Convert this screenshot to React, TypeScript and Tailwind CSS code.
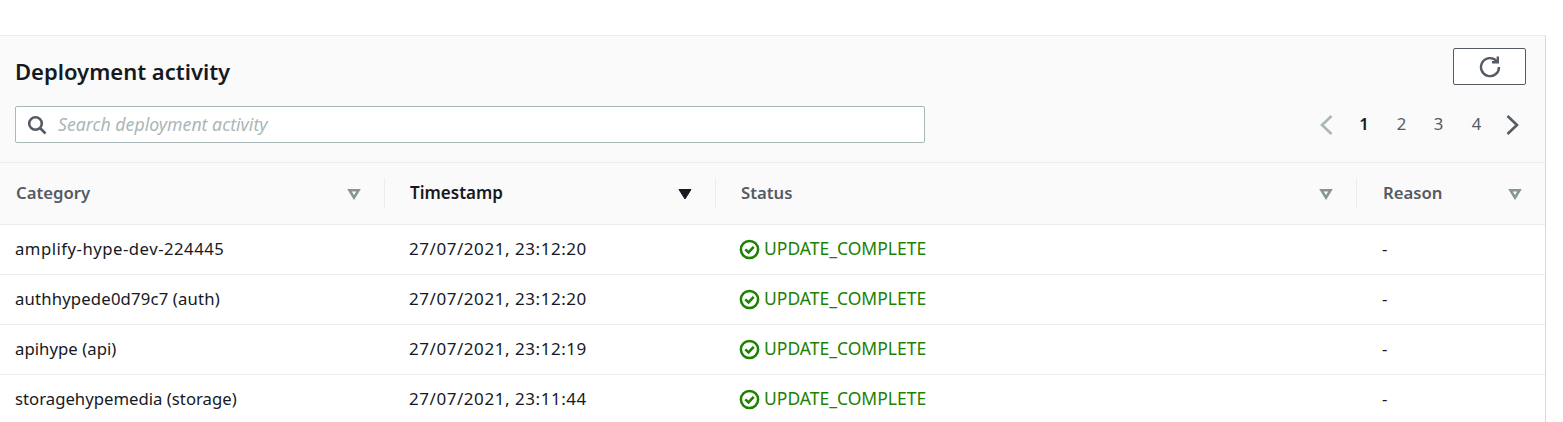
import React from "react";

const rows = [
  { name: "amplify-hype-dev-224445", time: "27/07/2021, 23:12:20", track: "tracking-[0.5px]" },
  { name: "authhypede0d79c7 (auth)", time: "27/07/2021, 23:12:20", track: "tracking-[0.17px]" },
  { name: "apihype (api)", time: "27/07/2021, 23:12:19", track: "tracking-[0.05px]" },
  { name: "storagehypemedia (storage)", time: "27/07/2021, 23:11:44", track: "tracking-[0.02px]" },
];

function Sort({ active = false }: { active?: boolean }) {
  return active ? (
    <svg width="14" height="12" viewBox="0 0 14 12" className="shrink-0">
      <path d="M1 1.5h12L7 11z" fill="#16191f" stroke="#16191f" strokeLinejoin="round" />
    </svg>
  ) : (
    <svg width="14" height="12" viewBox="0 0 14 12" className="shrink-0">
      <path d="M2.5 2.2h9L7 9.6z" fill="none" stroke="#879596" strokeWidth="2.6" strokeLinejoin="miter" />
    </svg>
  );
}

function Head({ label, active, divider, className }: { label: string; active?: boolean; divider?: boolean; className: string }) {
  return (
    <div className={`relative flex items-center justify-between ${className}`}>
      <span className={`-mt-[1px] font-semibold ${active ? "text-[17px] text-[#16191f]" : "text-[16.7px] text-[#545b64]"}`}>{label}</span>
      <Sort active={active} />
      {divider && <span className="absolute right-0 top-[15px] h-[30px] w-px bg-[#eaeded]" />}
    </div>
  );
}

function Check() {
  return (
    <svg width="21" height="21" viewBox="0 0 21 21" className="shrink-0" fill="none" stroke="#1d8102" strokeWidth="2.5">
      <circle cx="10.5" cy="10.5" r="8.6" />
      <path d="M6.3 10.4l3.2 3 5.2-5.6" strokeWidth="2.6" />
    </svg>
  );
}

export default function App() {
  return (
    <div className="h-[422px] w-[1563px] overflow-hidden bg-white pt-[35px] font-['Noto_Sans','Open_Sans',sans-serif] text-[16.7px] text-[#16191f]">
      <div className="w-[1546px] border-r border-t border-[#eaeded] border-r-[#d5dbdb]">
        <div className="flex h-[127px] justify-between border-b border-[#eaeded] bg-[#fafafa] pl-[15px] pr-[19px] pt-[12px]">
          <div className="flex flex-col">
            <h2 className="mt-[7px] h-[32px] text-[22px] font-semibold leading-[32px]">Deployment activity</h2>
            <div className="mt-[19px] flex h-[37px] w-[910px] items-center gap-[11px] rounded-[2px] border border-[#aab7b8] bg-white pl-[11px]">
              <svg width="20" height="20" viewBox="0 0 20 20" fill="none" stroke="#545b64" strokeWidth="2.6">
                <circle cx="8.5" cy="8.5" r="6.3" />
                <path d="M13 13l5.5 5.5" />
              </svg>
              <span className="-mt-[1px] text-[17.7px] italic text-[#aab7b8]">Search deployment activity</span>
            </div>
          </div>
          <div className="flex flex-col items-end">
            <button className="flex h-[37px] w-[73px] items-center justify-center rounded-[2px] border border-[#545b64] bg-white">
              <svg width="24" height="24" viewBox="0 0 24 24" fill="none" stroke="#545b64" strokeWidth="2.4" className="-mt-[2px]">
                <path d="M18.6 7A9 9 0 1 0 21 13" />
                <path d="M19.8 2.5v5.7H14" />
              </svg>
            </button>
            <div className="mt-[21px] flex h-[37px] items-center pr-[6px] text-[#545b64]">
              <svg width="14" height="22" viewBox="0 0 14 22" fill="none" stroke="#aab7b8" strokeWidth="2.6">
                <path d="M12.5 2L3 11l9.5 9" />
              </svg>
              <span className="-mt-[1px] ml-[26px] w-[10px] text-center font-semibold text-[#16191f]">1</span>
              <span className="-mt-[1px] ml-[27px] w-[11px] text-center">2</span>
              <span className="-mt-[1px] ml-[26px] w-[11px] text-center">3</span>
              <span className="-mt-[1px] ml-[27px] w-[11px] text-center">4</span>
              <svg width="14" height="22" viewBox="0 0 14 22" fill="none" stroke="#545b64" strokeWidth="2.6" className="ml-[24px]">
                <path d="M1.5 2L11 11l-9.5 9" />
              </svg>
            </div>
          </div>
        </div>
        <div className="grid h-[62px] grid-cols-[385px_331px_641px_1fr] border-b border-[#eaeded] bg-[#fafafa]">
          <Head label="Category" divider className="pl-[16px] pr-[24px]" />
          <Head label="Timestamp" active divider className="pl-[25px] pr-[24px]" />
          <Head label="Status" divider className="pl-[25px] pr-[24px]" />
          <Head label="Reason" className="pl-[26px] pr-[23px]" />
        </div>
        {rows.map((r) => (
          <div key={r.name} className="grid h-[50px] grid-cols-[385px_331px_641px_1fr] items-center border-b border-[#eaeded] bg-white">
            <div className={`-mt-[1px] pl-[15px] ${r.track}`}>{r.name}</div>
            <div className="-mt-[1px] pl-[24px] text-[17px] tracking-[0.55px]">{r.time}</div>
            <div className="flex items-center gap-[4px] pl-[23px] text-[17.5px] text-[#1d8102]">
              <Check />
              <span className="-mt-[2px]">UPDATE_COMPLETE</span>
            </div>
            <div className="-mt-[1px] pl-[25px]">-</div>
          </div>
        ))}
      </div>
    </div>
  );
}
